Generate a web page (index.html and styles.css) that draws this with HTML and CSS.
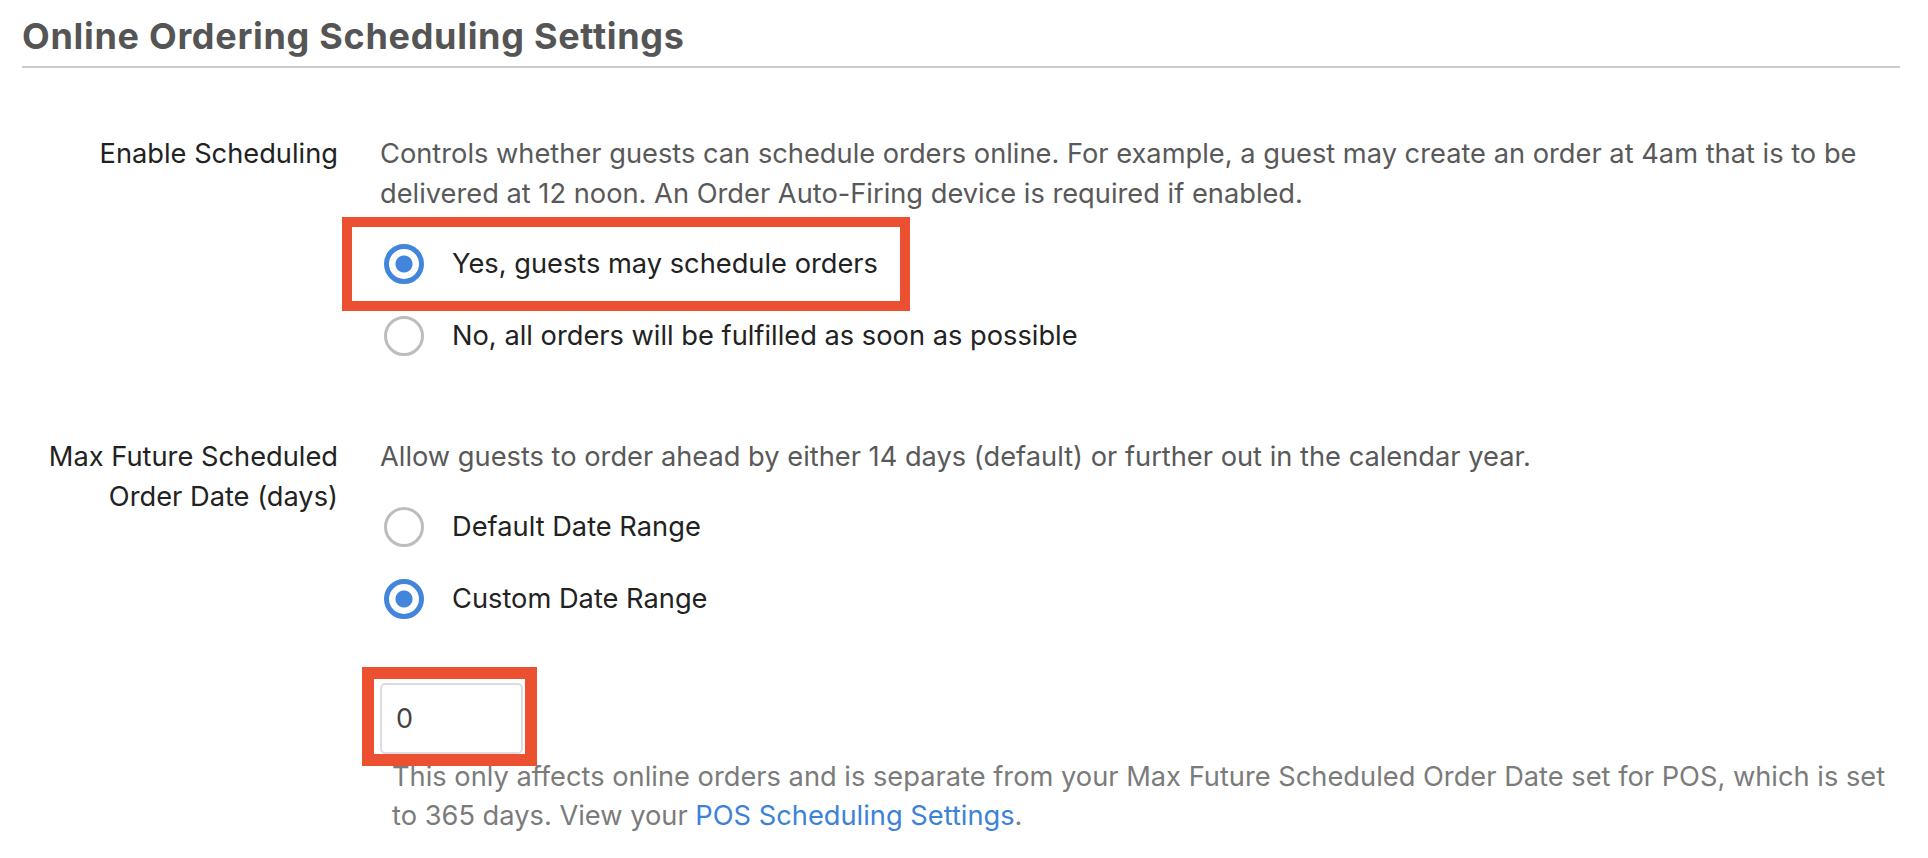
FILE: index.html
```html
<!DOCTYPE html>
<html lang="en">
<head>
    <meta charset="UTF-8">
    <meta name="viewport" content="width=device-width, initial-scale=1.0">
    <title>Online Ordering Scheduling Settings</title>
    <link rel="stylesheet" href="styles.css">
</head>
<body>
    <div class="settings">
        <h2 class="settings-title">Online Ordering Scheduling Settings</h2>

        <div class="field-row first">
            <div class="field-label">Enable Scheduling</div>
            <div class="field-body">
                <p class="field-desc">Controls whether guests can schedule orders online. For example, a guest may create an order at 4am that is to be delivered at 12 noon. An Order Auto-Firing device is required if enabled.</p>
                <label class="option marked">
                    <input type="radio" name="scheduling" checked>
                    <span>Yes, guests may schedule orders</span>
                </label>
                <label class="option">
                    <input type="radio" name="scheduling">
                    <span>No, all orders will be fulfilled as soon as possible</span>
                </label>
            </div>
        </div>

        <div class="field-row">
            <div class="field-label">Max Future Scheduled Order Date (days)</div>
            <div class="field-body">
                <p class="field-desc">Allow guests to order ahead by either 14 days (default) or further out in the calendar year.</p>
                <label class="option">
                    <input type="radio" name="dateRange">
                    <span>Default Date Range</span>
                </label>
                <label class="option">
                    <input type="radio" name="dateRange" checked>
                    <span>Custom Date Range</span>
                </label>
                <div class="days-input marked">
                    <input type="text" value="0">
                </div>
                <p class="field-help">This only affects online orders and is separate from your Max Future Scheduled Order Date set for POS, which is set to 365 days. View your <a href="#">POS Scheduling Settings</a>.</p>
            </div>
        </div>
    </div>
</body>
</html>
```

FILE: styles.css
```css
body {
    margin: 0;
    font-family: Inter, Roboto, "Liberation Sans", sans-serif;
    background: #fff;
    color: #222;
}

.settings {
    width: 1878px;
    padding: 0 22px;
}

.settings-title {
    margin: 0;
    padding-top: 16px;
    padding-bottom: 10px;
    font-size: 36px;
    line-height: 40px;
    letter-spacing: 0.7px;
    font-weight: 700;
    color: #555;
    border-bottom: 2px solid #cbcad0;
}

.field-row {
    display: flex;
    margin-top: 65px;
    font-size: 27.25px;
    line-height: 40px;
}

.field-row.first {
    margin-top: 66px;
}

.field-label {
    width: 316px;
    flex-shrink: 0;
    text-align: right;
    color: #222;
}

.field-body {
    flex: 1;
    margin-left: 42px;
}

.field-desc {
    margin: 0 0 14px;
    color: #595959;
}

.option {
    position: relative;
    display: flex;
    align-items: center;
    height: 72px;
    color: #222;
    cursor: pointer;
}

.option input {
    appearance: none;
    -webkit-appearance: none;
    box-sizing: border-box;
    width: 40px;
    height: 40px;
    margin: 0 28px 0 4px;
    border: 3px solid #bdbdbd;
    border-radius: 50%;
    background: #fff;
}

.option input:checked {
    border: 5px solid #4285dc;
    background: radial-gradient(circle, #4285dc 8px, #fff 9px);
}

/* red call-out frames drawn over the highlighted controls */
.marked {
    position: relative;
}

.option.marked::after {
    content: "";
    position: absolute;
    left: -38px;
    top: -11px;
    width: 568px;
    height: 94px;
    box-sizing: border-box;
    border: 10px solid #eb5130;
    pointer-events: none;
}

.days-input {
    margin-top: 48px;
    width: 143px;
}

.days-input input {
    box-sizing: border-box;
    width: 143px;
    height: 71px;
    padding: 0 14px;
    border: 2px solid #dcdce1;
    border-radius: 5px;
    font-family: inherit;
    font-size: 27px;
    color: #444;
}

.days-input.marked::after {
    content: "";
    position: absolute;
    left: -18px;
    top: -16px;
    width: 175px;
    height: 99px;
    box-sizing: border-box;
    border: 12px solid #eb5130;
    pointer-events: none;
}

.field-help {
    margin: 3px 0 0;
    padding-left: 12px;
    line-height: 39px;
    color: #7b7b7b;
}

.field-help a {
    color: #3b82d8;
    text-decoration: none;
}
```
